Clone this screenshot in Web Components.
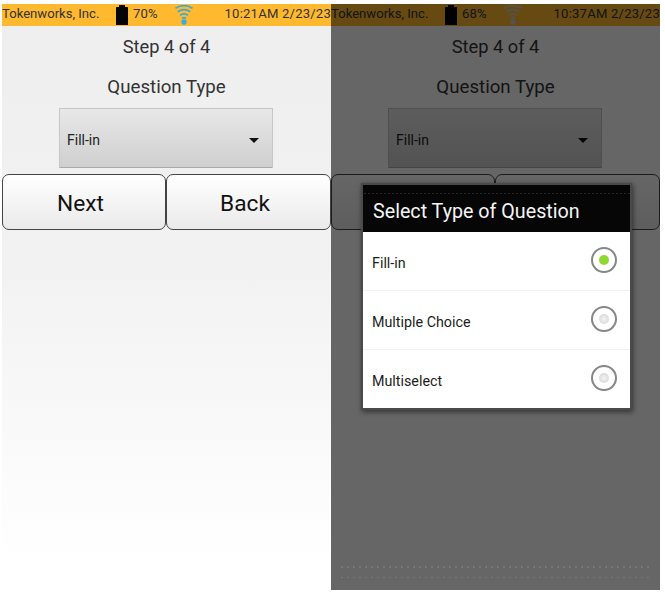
<!DOCTYPE html>
<html>
<head>
<meta charset="utf-8">
<title>Question Type</title>
<style>
html, body {margin:0; padding:0; background:#fff;}
body {display:flex; align-items:flex-start; padding:4px 0 0 2px; font-family:Roboto, "Liberation Sans", sans-serif;}
</style>
</head>
<body>

<phone-screen clock="10:21AM 2/23/23" battery="70%" wifi="#3ba9e2"></phone-screen>

<phone-screen clock="10:37AM 2/23/23" battery="68%" wifi="#cfcfcf" dimmed>
	<type-dialog title="Select Type of Question">
		<type-option selected>Fill-in</type-option>
		<type-option>Multiple Choice</type-option>
		<type-option>Multiselect</type-option>
	</type-dialog>
</phone-screen>

<script>
class statusBar extends HTMLElement {

	connectedCallback() {
		const shadowRoot = this.attachShadow({ mode: 'open' });
		shadowRoot.innerHTML = `
			<style>
			:host {display:grid; grid-template-columns:114px 17px 43px 1fr; align-items:center; height:22px;
				background:#feb92f; color:#333; font-size:13.100px; line-height:20px; white-space:nowrap;}
			span {margin-top:-2px;}
			.battery {display:block; width:12px; height:20px;}
			.level {letter-spacing:.2px;}
			.wifi {display:block; width:18px; height:20px; margin-left:-1px;}
			.right {display:flex; justify-content:space-between; align-items:center; margin-top:0;}
			.clock {letter-spacing:.2px;}
			</style>
			<span class="company">Tokenworks, Inc.</span>
			<svg class="battery" viewBox="0 0 12 20"><path fill="#050505" d="M3 0h6v2h2.400l.6.6V20H0V2.600L.6 2H3z"/></svg>
			<span class="level">${this.getAttribute('battery')}</span>
			<span class="right">
				<svg class="wifi" viewBox="0 0 18 20" fill="none" stroke="${this.getAttribute('wifi')}" stroke-width="1.700">
					<path d="M.5 3.200C5.500 -.2 12.500 -.2 17.500 3.200"/>
					<path d="M2.800 6.800C6.500 4.300 11.500 4.300 15.200 6.800"/>
					<path d="M5 10.300C7.500 8.600 10.500 8.600 13 10.300"/>
					<path d="M6.900 13.400C8.100 12.600 9.900 12.600 11.100 13.400"/>
					<circle cx="9" cy="17" r="2.700" fill="${this.getAttribute('wifi')}" stroke="none"/>
				</svg>
				<span class="clock">${this.getAttribute('clock')}</span>
			</span>
		`;
	}
};

class selectBox extends HTMLElement {

	connectedCallback() {
		const shadowRoot = this.attachShadow({ mode: 'open' });
		shadowRoot.innerHTML = `
			<style>
			:host {display:flex; align-items:center; justify-content:space-between; box-sizing:border-box;
				width:214px; height:60px; padding:4px 13px 0 7px; font-size:14px; color:#222;
				background:linear-gradient(#e8e8e8, #cfcfcf); border-radius:1px;
				border:1px solid #c6c6c6; border-bottom-color:#aaa;}
			.arrow {width:0; height:0; border-style:solid; border-width:5px 5.500px 0; border-color:#111 transparent transparent;}
			</style>
			<slot></slot>
			<span class="arrow"></span>
		`;
	}
};

class appButton extends HTMLElement {

	connectedCallback() {
		const shadowRoot = this.attachShadow({ mode: 'open' });
		shadowRoot.innerHTML = `
			<style>
			:host {display:flex; align-items:center; justify-content:center; box-sizing:border-box; flex:1;
				height:56px; padding:2px 7px 0 0; font-size:22.700px; color:#111; border:1px solid #444; border-radius:7px;
				background:linear-gradient(#fff, #eaeaea);}
			:host(:first-child) {flex:0 0 164px;}
			</style>
			<slot></slot>
		`;
	}
};

class typeOption extends HTMLElement {

	connectedCallback() {
		const shadowRoot = this.attachShadow({ mode: 'open' });
		shadowRoot.innerHTML = `
			<style>
			:host {display:flex; align-items:center; justify-content:space-between; box-sizing:border-box;
				height:59px; padding:4px 13px 0 9px; font-size:14.300px; color:#1c1c1c; border-bottom:1px solid #f2f2f2;}
			:host(:last-child) {border-bottom:0; height:58px;}
			.radio {display:flex; align-items:center; justify-content:center; box-sizing:border-box;
				width:26px; height:26px; margin-top:-7px; border:2px solid #868686; border-radius:50%;}
			.radio span {width:10px; height:10px; border-radius:50%; background:radial-gradient(#f4f4f4, #cfcfcf);}
			:host([selected]) .radio span {background:#8fd92f;}
			</style>
			<slot></slot>
			<span class="radio"><span></span></span>
		`;
	}
};

class typeDialog extends HTMLElement {

	connectedCallback() {
		const shadowRoot = this.attachShadow({ mode: 'open' });
		shadowRoot.innerHTML = `
			<style>
			:host {position:absolute; left:32px; top:181px; width:267px; background:#fff;
				box-shadow:0 0 1px 2px #4a4a4a, 1px 2px 5px 2px rgba(0,0,0,.5);}
			.title {display:flex; align-items:center; box-sizing:border-box; height:47px; padding:6px 0 0 10px;
				color:#f5f5f5; font-size:19.700px;
				background:
					radial-gradient(circle, rgba(255,255,255,.12) .5px, transparent .7px) 8px 7px/4px 3px repeat-x,
					#060606;}
			</style>
			<div class="title">${this.getAttribute('title')}</div>
			<slot></slot>
		`;
	}
};

class phoneScreen extends HTMLElement {

	connectedCallback() {
		const dimmed = this.hasAttribute('dimmed');
		const shadowRoot = this.attachShadow({ mode: 'open' });
		shadowRoot.innerHTML = `
			<style>
			:host {display:block; position:relative; width:329px; height:586px; color:#333;
				background:linear-gradient(#eeeeee 0, #f2f2f2 45%, #ffffff 95%);
				font-family:Roboto, "Liberation Sans", sans-serif;}
			:host([dimmed]) {background:#fff;}
			.body {display:flex; flex-direction:column; align-items:center;}
			.step {margin-top:10px; height:21px; line-height:21px; font-size:18.300px;}
			.label {margin-top:20px; height:21px; line-height:21px; font-size:18.700px;}
			select-box {margin:10px 1px 0 0;}
			.buttons {display:flex; width:100%; margin-top:6px;}
			.scrim {position:absolute; inset:0; background:rgba(0,0,0,.6);}
			.dots {position:absolute; left:8px; right:10px; top:562px; height:12px;
				background:
					radial-gradient(circle, rgba(255,255,255,.22) .6px, transparent .8px) 0 0/6px 2px repeat-x,
					radial-gradient(circle, rgba(255,255,255,.22) .6px, transparent .8px) 0 11px/6px 2px repeat-x;}
			</style>
			<status-bar battery="${this.getAttribute('battery')}" clock="${this.getAttribute('clock')}" wifi="${this.getAttribute('wifi')}"></status-bar>
			<div class="body">
				<div class="step">Step 4 of 4</div>
				<div class="label">Question Type</div>
				<select-box>Fill-in</select-box>
				<div class="buttons">
					<app-button>${dimmed ? '' : 'Next'}</app-button>
					<app-button>${dimmed ? '' : 'Back'}</app-button>
				</div>
			</div>
			${dimmed ? '<div class="scrim"></div><div class="dots"></div>' : ''}
			<slot></slot>
		`;
	}
};

customElements.define('status-bar', statusBar);
customElements.define('select-box', selectBox);
customElements.define('app-button', appButton);
customElements.define('type-option', typeOption);
customElements.define('type-dialog', typeDialog);
customElements.define('phone-screen', phoneScreen);
</script>
</body>
</html>
